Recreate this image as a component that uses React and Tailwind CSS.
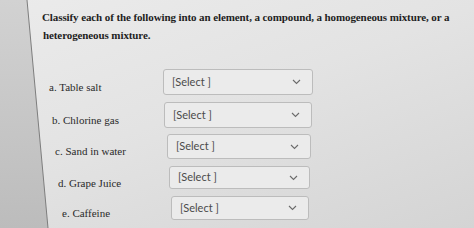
const ROWS = [
  { label: 'a. Table salt', row: 'pl-[49px] h-[26px]', lab: 'w-[114px] pt-[11px]', box: 'w-[150px] h-[26px]', gap: 'mt-[25px]' },
  { label: 'b. Chlorine gas', row: 'pl-[52px] h-[26px]', lab: 'w-[112px] pt-[11px]', box: 'w-[148px] h-[26px]', gap: 'mt-[7px]' },
  { label: 'c. Sand in water', row: 'pl-[55px] h-[25px]', lab: 'w-[112px] pt-[10px]', box: 'w-[144px] h-[25px]', gap: 'mt-[6px]' },
  { label: 'd. Grape Juice', row: 'pl-[58px] h-[23px]', lab: 'w-[111px] pt-[10px]', box: 'w-[141px] h-[23px]', gap: 'mt-[7px]' },
  { label: 'e. Caffeine', row: 'pl-[62px] h-[24px]', lab: 'w-[109px] pt-[10px]', box: 'w-[138px] h-[24px]', gap: 'mt-[7px]' },
];

function Chevron() {
  return (
    <svg width="9" height="6" viewBox="0 0 9 6" fill="none">
      <path d="M1 1l3.5 3.5L8 1" stroke="#6b6b6b" strokeWidth="1.1" />
    </svg>
  );
}

export default function App() {
  return (
    <div className="relative w-[474px] h-[228px] overflow-hidden bg-[linear-gradient(160deg,#ebebeb_0%,#e3e3e3_45%,#d4d4d4_100%)]">
      {/* left edge of the screen panel */}
      <svg className="absolute inset-0 pointer-events-none" width="474" height="228">
        <defs>
          <linearGradient id="edge" x1="0" y1="0" x2="0" y2="1">
            <stop offset="0" stopColor="#d2d2d2" />
            <stop offset="1" stopColor="#bcbcbc" />
          </linearGradient>
        </defs>
        <polygon points="0,0 27,0 48,228 0,228" fill="url(#edge)" />
        <line x1="27" y1="0" x2="48" y2="228" stroke="#7d7d7d" strokeWidth="1" />
      </svg>

      <div className="relative pt-[8px] font-['Liberation_Serif',serif] text-[#1e1e1e]">
        <p className="pl-[42px] text-[11px] leading-[18px] font-semibold tracking-[-0.1px]">
          Classify each of the following into an element, a compound, a homogeneous mixture, or a
        </p>
        <p className="pl-[43px] text-[11px] leading-[18px] font-semibold tracking-[-0.1px]">heterogeneous mixture.</p>

        {ROWS.map((r) => (
          <div key={r.label} className={`flex items-start ${r.row} ${r.gap}`}>
            <div className={`${r.lab} text-[11px] leading-[14px] text-[#2a2a2a]`}>{r.label}</div>
            <div className={`${r.box} flex items-center justify-between pl-[8px] pr-[11px] rounded-[3px] border border-[#bcbcbc] bg-[#ebebeb]`}>
              <span className="font-['Lato','Open_Sans',sans-serif] text-[11px] text-[#4a4a4a]">[Select ]</span>
              <Chevron />
            </div>
          </div>
        ))}
      </div>
    </div>
  );
}
